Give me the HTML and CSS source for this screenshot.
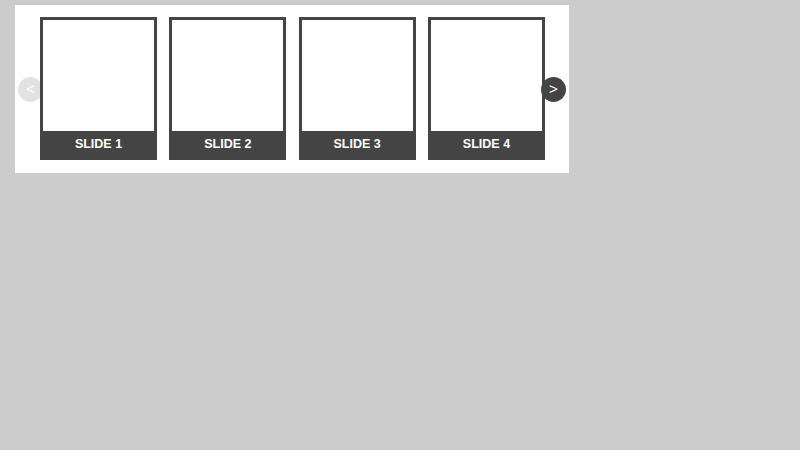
FILE: index.html
```html
<!DOCTYPE html>
<html>
<head>
<meta charset="utf-8">
<link rel="stylesheet" href="styles.css">
</head>
<body>
<div class="carousel">
  <div class="track">
    <div class="slide"><div class="pic"></div><div class="cap">SLIDE 1</div></div>
    <div class="slide"><div class="pic"></div><div class="cap">SLIDE 2</div></div>
    <div class="slide"><div class="pic"></div><div class="cap">SLIDE 3</div></div>
    <div class="slide"><div class="pic"></div><div class="cap">SLIDE 4</div></div>
  </div>
  <div class="nav prev">&lt;</div>
  <div class="nav next">&gt;</div>
</div>
</body>
</html>
```
FILE: styles.css
```css
html, body { margin: 0; padding: 0; }
body {
  background: #cccccc;
  font-family: "Liberation Sans", Arial, sans-serif;
  width: 800px;
  height: 450px;
  overflow: hidden;
}
.carousel {
  position: relative;
  margin: 5px 0 0 15px;
  width: 554px;
  height: 168px;
  background: #ffffff;
  box-sizing: border-box;
  padding: 12px 0 0 25px;
}
.track {
  display: flex;
  gap: 12.33px;
}
.slide {
  width: 117px;
  height: 143px;
  box-sizing: border-box;
  background: #444444;
  padding: 3px 3px 0 3px;
  display: flex;
  flex-direction: column;
}
.pic {
  height: 111px;
  background: #ffffff;
}
.cap {
  height: 29px;
  box-sizing: border-box;
  padding-bottom: 3px;
  line-height: 26px;
  text-align: center;
  color: #ffffff;
  font-weight: bold;
  font-size: 12.5px;
}
.nav {
  position: absolute;
  top: 72px;
  width: 25px;
  height: 25px;
  border-radius: 50%;
  background: #444444;
  color: #ffffff;
  font-size: 15px;
  line-height: 24px;
  text-align: center;
}
.prev { left: 3px; opacity: 0.15; }
.next { left: 526px; }
```
